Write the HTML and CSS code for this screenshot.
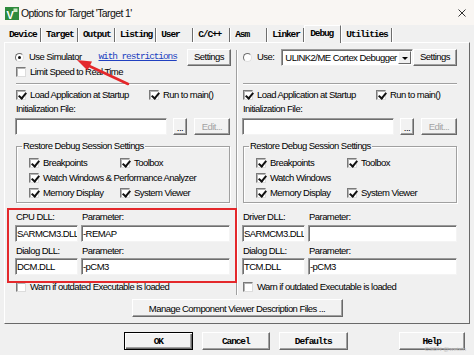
FILE: index.html
```html
<!DOCTYPE html>
<html>
<head>
<meta charset="utf-8">
<title>Options for Target 'Target 1'</title>
<link rel="stylesheet" href="styles.css">
</head>
<body>
<div class="win">
  <header class="titlebar">
    <svg class="appicon" viewBox="0 0 14 13" width="14" height="13"><rect width="14" height="13" fill="#2f8a3c"/><rect x="8.5" y="1.5" width="4" height="3.5" fill="#cfe9c8"/><text x="5" y="11.5" font-size="11" font-weight="bold" fill="#fff" font-family="Liberation Sans" text-anchor="middle">V</text></svg>
    <span class="title">Options for Target 'Target 1'</span>
    <svg class="close" viewBox="0 0 8 8" width="8" height="8"><path d="M0.5 0.5L7.5 7.5M7.5 0.5L0.5 7.5" stroke="#333" stroke-width="1"/></svg>
  </header>

  <nav class="tabs">
    <span class="tab">Device</span>
    <span class="tab">Target</span>
    <span class="tab">Output</span>
    <span class="tab">Listing</span>
    <span class="tab">User</span>
    <span class="tab">C/C++</span>
    <span class="tab">Asm</span>
    <span class="tab">Linker</span>
    <span class="tab sel">Debug</span>
    <span class="tab">Utilities</span>
  </nav>

  <section class="page">
    <div class="cols">
      <div class="col left">
        <div class="row r1">
          <span class="rd on"></span><span class="lbl">Use Simulator</span>
          <span class="link">with restrictions</span>
          <button class="btn set">Settings</button>
        </div>
        <div class="row r2"><span class="cb"></span><span class="lbl">Limit Speed to Real Time</span></div>
        <div class="sep"></div>
        <div class="row two">
          <span class="ck"><span class="cb on"></span><span class="lbl">Load Application at Startup</span></span>
          <span class="ck"><span class="cb on"></span><span class="lbl">Run to main()</span></span>
        </div>
        <div class="row">Initialization File:</div>
        <div class="filerow">
          <span class="in grow"></span>
          <button class="btn dots">...</button>
          <button class="btn edit">Edit...</button>
        </div>
        <fieldset class="grp">
          <legend>Restore Debug Session Settings</legend>
          <div class="grid">
            <span class="ck"><span class="cb on"></span><span class="lbl">Breakpoints</span></span>
            <span class="ck"><span class="cb on"></span><span class="lbl">Toolbox</span></span>
            <span class="ck span"><span class="cb on"></span><span class="lbl">Watch Windows &amp; Performance Analyzer</span></span>
            <span class="ck"><span class="cb on"></span><span class="lbl">Memory Display</span></span>
            <span class="ck"><span class="cb on"></span><span class="lbl">System Viewer</span></span>
          </div>
        </fieldset>
        <div class="dll">
          <span class="dl">CPU DLL:</span><span class="dl">Parameter:</span>
          <span class="in">SARMCM3.DLL</span><span class="in">-REMAP</span>
          <span class="dl low">Dialog DLL:</span><span class="dl low">Parameter:</span>
          <span class="in">DCM.DLL</span><span class="in">-pCM3</span>
        </div>
        <div class="row warn"><span class="cb"></span><span class="lbl">Warn if outdated Executable is loaded</span></div>
      </div>

      <div class="vsep"></div>

      <div class="col right">
        <div class="row r1">
          <span class="rd"></span><span class="lbl">Use:</span>
          <span class="combo"><span class="val">ULINK2/ME Cortex Debugger</span><span class="arr"></span></span>
          <button class="btn set">Settings</button>
        </div>
        <div class="row r2"></div>
        <div class="sep"></div>
        <div class="row two">
          <span class="ck"><span class="cb on"></span><span class="lbl">Load Application at Startup</span></span>
          <span class="ck"><span class="cb on"></span><span class="lbl">Run to main()</span></span>
        </div>
        <div class="row">Initialization File:</div>
        <div class="filerow">
          <span class="in grow"></span>
          <button class="btn dots">...</button>
          <button class="btn edit">Edit...</button>
        </div>
        <fieldset class="grp">
          <legend>Restore Debug Session Settings</legend>
          <div class="grid">
            <span class="ck"><span class="cb on"></span><span class="lbl">Breakpoints</span></span>
            <span class="ck"><span class="cb on"></span><span class="lbl">Toolbox</span></span>
            <span class="ck span"><span class="cb on"></span><span class="lbl">Watch Windows</span></span>
            <span class="ck"><span class="cb on"></span><span class="lbl">Memory Display</span></span>
            <span class="ck"><span class="cb on"></span><span class="lbl">System Viewer</span></span>
          </div>
        </fieldset>
        <div class="dll">
          <span class="dl">Driver DLL:</span><span class="dl">Parameter:</span>
          <span class="in">SARMCM3.DLL</span><span class="in"></span>
          <span class="dl low">Dialog DLL:</span><span class="dl low">Parameter:</span>
          <span class="in">TCM.DLL</span><span class="in">-pCM3</span>
        </div>
        <div class="row warn"><span class="cb"></span><span class="lbl">Warn if outdated Executable is loaded</span></div>
      </div>
    </div>
    <div class="manage"><button class="btn mng">Manage Component Viewer Description Files ...</button></div>
  </section>

  <footer class="footer">
    <button class="btn fb ok">OK</button>
    <button class="btn fb">Cancel</button>
    <button class="btn fb">Defaults</button>
    <button class="btn fb help">Help</button>
  </footer>

  <div class="redbox"></div>
  <svg class="arrow" viewBox="0 0 474 355" width="474" height="355">
    <line x1="128" y1="84" x2="86" y2="64.5" stroke="#e4282b" stroke-width="2.6" stroke-linecap="round"/>
    <polygon points="77,60 92,61.5 87.5,70.5" fill="#e4282b"/>
  </svg>
  <span class="wm">CSDN @weixin</span>
</div>
</body>
</html>
```

FILE: styles.css
```css
* { box-sizing: border-box; }
html, body { margin: 0; padding: 0; }
body {
  width: 474px;
  height: 355px;
  overflow: hidden;
  background: #f0f0f0;
  font-family: "Liberation Sans", Arial, sans-serif;
  font-size: 9.5px;
  letter-spacing: -0.55px;
  color: #000;
}
.win { position: relative; width: 474px; height: 355px; }

/* title bar */
.titlebar {
  height: 25px;
  display: flex;
  align-items: center;
  padding-left: 5px;
  background: #f9f6f3;
}
.appicon { display: block; margin-top: 1px; }
.title { margin-left: 2px; font-size: 10.5px; letter-spacing: -0.6px; color: #111; }
.close { margin-left: auto; margin-right: 8px; display: block; }

/* tabs */
.tabs {
  height: 17px;
  display: flex;
  align-items: flex-end;
  padding-left: 4px;
}
.tab {
  height: 14px;
  line-height: 14px;
  min-width: 37px;
  padding: 0 3px 0 5px;
  border-right: 1px solid #6d6d6d;
  box-shadow: 1px 0 0 #fff;
  font-family: "Liberation Mono", monospace;
  font-weight: bold;
  font-size: 9.5px;
  letter-spacing: -1.1px;
  white-space: nowrap;
}
.tab.sel {
  height: 18px;
  line-height: 15px;
  margin-bottom: -1px;
  border-top: 1px solid #fff;
  border-left: 1px solid #fff;
  background: #f0f0f0;
  position: relative;
  z-index: 1;
}

/* page */
.page {
  margin-left: 4px;
  width: 466px;
  border: 1px solid;
  border-color: #fff #696969 #696969 #fff;
  padding-bottom: 6px;
}
.cols { display: flex; }
.col {
  width: 231px;
  display: flex;
  flex-direction: column;
  padding-bottom: 2px;
}
.col.left { padding-left: 11px; padding-right: 6px; }
.col.right { padding-left: 5px; padding-right: 12px; }
.vsep {
  width: 2px;
  margin-top: 7px;
  border-left: 1px solid #a0a0a0;
  border-right: 1px solid #fff;
}

.row {
  height: 12px;
  line-height: 12px;
  display: flex;
  align-items: center;
  white-space: nowrap;
  margin-top: 2px;
}
.row.r1 { height: 18px; margin-top: 5px; }
.row.r2 { margin-top: 0; }
.row.two { display: grid; grid-template-columns: 133px auto; margin-top: 4px; }
.row.warn { margin-top: 6px; }
.ck { display: flex; align-items: center; white-space: nowrap; }
.lbl { margin-left: 4px; }

.sep {
  height: 2px;
  margin-top: 5px;
  border-top: 1px solid #a0a0a0;
  border-bottom: 1px solid #fff;
}

/* controls */
.cb {
  width: 10px;
  height: 10px;
  flex: none;
  position: relative;
  background: #fff;
  border: 1px solid;
  border-color: #7a7a7a #dcdcdc #dcdcdc #7a7a7a;
  box-shadow: inset 1px 1px 0 #b4b4b4;
}
.cb.on::after {
  content: "";
  position: absolute;
  left: 2.5px;
  top: 0px;
  width: 3px;
  height: 6px;
  border-right: 2px solid #111;
  border-bottom: 2px solid #111;
  transform: rotate(40deg);
}
.rd {
  width: 9px;
  height: 9px;
  flex: none;
  position: relative;
  border-radius: 50%;
  background: #fff;
  border: 1px solid;
  border-color: #6f6f6f #e0e0e0 #e0e0e0 #6f6f6f;
  margin-left: -1px;
}
.col.right .rd { margin-left: 0; }
.rd.on::after {
  content: "";
  position: absolute;
  left: 2px;
  top: 2px;
  width: 3px;
  height: 3px;
  border-radius: 50%;
  background: #111;
}
.r1 .lbl { margin-left: 5px; }
.link {
  margin-left: 17px;
  font-family: "Liberation Mono", monospace;
  font-size: 9.5px;
  letter-spacing: -1.1px;
  color: #2040c0;
  text-decoration: underline;
}

.btn {
  appearance: none;
  font: inherit;
  letter-spacing: inherit;
  color: #000;
  background: #f2f2f2;
  border: 1px solid;
  border-color: #fff #696969 #696969 #fff;
  box-shadow: inset -1px -1px 0 #a0a0a0;
  height: 17px;
  padding: 0;
  margin: 0;
  display: flex;
  align-items: center;
  justify-content: center;
  white-space: nowrap;
}
.btn.set { margin-left: auto; width: 44px; }
.col.left .btn.set { margin-right: -1px; }

.in {
  display: block;
  height: 17px;
  line-height: 15px;
  background: #fff;
  border: 1px solid;
  border-color: #9a9a9a #f4f4f4 #f4f4f4 #9a9a9a;
  box-shadow: inset 1px 1px 0 #6e6e6e;
  padding: 0 0 0 2px;
  white-space: nowrap;
  overflow: hidden;
}

.filerow { display: flex; margin-top: 3px; height: 17px; }
.filerow .grow { flex: 1; margin-left: -1px; }
.btn.dots { width: 14px; margin-left: 6px; align-items: flex-end; line-height: 12px; }
.btn.edit { width: 36px; margin-left: 7px; color: #a3a3a3; }

.combo {
  display: flex;
  width: 132px;
  height: 17px;
  margin-left: 7px;
  background: #fff;
  border: 1px solid;
  border-color: #9a9a9a #f4f4f4 #f4f4f4 #9a9a9a;
  box-shadow: inset 1px 1px 0 #6e6e6e;
  padding: 1px 1px 1px 2px;
}
.combo .val { flex: 1; line-height: 13px; padding-left: 1px; white-space: nowrap; overflow: hidden; }
.combo .arr {
  width: 13px;
  flex: none;
  position: relative;
  background: #f0f0f0;
  border: 1px solid;
  border-color: #fff #696969 #696969 #fff;
}
.combo .arr::after {
  content: "";
  position: absolute;
  left: 3px;
  top: 5px;
  border-left: 3px solid transparent;
  border-right: 3px solid transparent;
  border-top: 3px solid #000;
}

/* group box */
.grp {
  margin: 5px 0 0 0;
  padding: 3px 0 2px 12px;
  border: 1px solid #a0a0a0;
  box-shadow: 1px 1px 0 #fff, inset 1px 1px 0 #fff;
  min-width: 0;
}
.grp legend {
  padding: 0 1px;
  margin-left: -7px;
  line-height: 12px;
  height: 12px;
}
.grid {
  display: grid;
  grid-template-columns: 91px auto;
  grid-auto-rows: 15px;
  align-items: center;
}
.grid .span { grid-column: 1 / -1; }

/* DLL fields */
.dll {
  display: grid;
  grid-template-columns: 63px 1fr;
  grid-template-rows: 13px 17px 14px 17px;
  column-gap: 3px;
  row-gap: 1px;
  margin-top: 8px;
  margin-left: -1px;
}
.dll .in { padding-left: 1px; }
.dl { line-height: 12px; padding-left: 1px; white-space: nowrap; }
.dl.low { align-self: end; }

/* manage row */
.manage { display: flex; justify-content: center; margin-top: 4px; }
.btn.mng { width: 211px; height: 18px; }

/* footer */
.footer {
  display: flex;
  margin-top: 8px;
  padding-left: 124px;
  height: 18px;
}
.btn.fb {
  height: 18px;
  width: 69px;
  margin-right: 9px;
  font-family: "Liberation Mono", monospace;
  font-weight: bold;
  font-size: 9.5px;
  letter-spacing: -1.1px;
}
.btn.ok {
  border-color: #000;
  box-shadow: inset 1px 1px 0 #fff, inset -1px -1px 0 #696969, inset -2px -2px 0 #a0a0a0;
}
.btn.help { margin-left: 42px; width: 67px; }

/* annotations */
.redbox {
  position: absolute;
  left: 7px;
  top: 208px;
  width: 230px;
  height: 75px;
  border: 2px solid #e4282b;
  pointer-events: none;
}
.arrow { position: absolute; left: 0; top: 0; pointer-events: none; }
.wm {
  position: absolute;
  right: 8px;
  bottom: 3px;
  font-size: 6px;
  letter-spacing: 0;
  color: #c2c2c2;
  font-family: "Liberation Sans", sans-serif;
}
```
